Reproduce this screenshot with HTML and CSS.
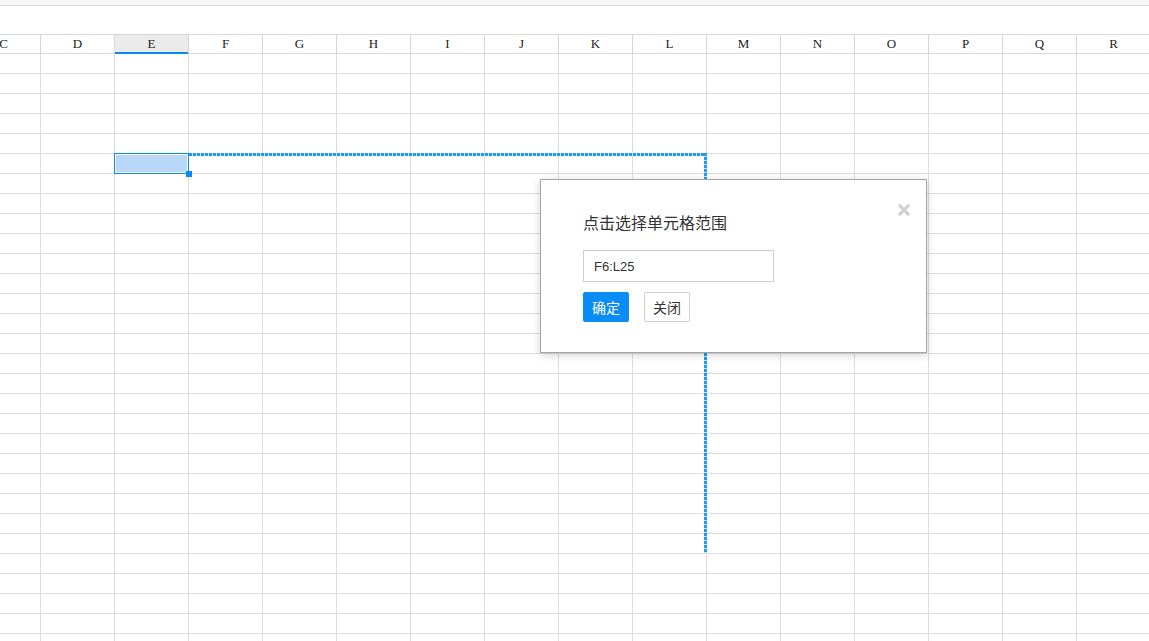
FILE: index.html
```html
<!DOCTYPE html>
<html lang="zh">
<head>
<meta charset="utf-8">
<title>Sheet</title>
<link rel="stylesheet" href="styles.css">
</head>
<body>
<div class="topbar"></div>
<div class="toolbar"></div>
<div class="sheet">
  <div class="colheader">
    <div class="col">C</div>
    <div class="col">D</div>
    <div class="col active">E</div>
    <div class="col">F</div>
    <div class="col">G</div>
    <div class="col">H</div>
    <div class="col">I</div>
    <div class="col">J</div>
    <div class="col">K</div>
    <div class="col">L</div>
    <div class="col">M</div>
    <div class="col">N</div>
    <div class="col">O</div>
    <div class="col">P</div>
    <div class="col">Q</div>
    <div class="col">R</div>
  </div>
  <div class="cells"></div>
  <div class="selection"></div>
  <div class="handle"></div>
  <div class="range-top"></div>
  <div class="range-right"></div>
</div>

<div class="dialog">
  <button class="close" aria-label="close">
    <svg width="12" height="12" viewBox="0 0 12 12"><path d="M2 2 L10 10 M10 2 L2 10" stroke="#d2d2d2" stroke-width="3.2" stroke-linecap="square"/></svg>
  </button>
  <div class="title">点击选择单元格范围</div>
  <input class="range-input" type="text" value="F6:L25">
  <div class="actions">
    <button class="btn primary">确定</button>
    <button class="btn">关闭</button>
  </div>
</div>
</body>
</html>
```

FILE: styles.css
```css
html, body {
  margin: 0;
  padding: 0;
  width: 1149px;
  height: 641px;
  overflow: hidden;
  background: #fff;
  font-family: "Liberation Sans", Arial, "Noto Sans CJK SC", sans-serif;
}

.topbar {
  height: 5px;
  background: #f6f6f8;
  border-bottom: 1px solid #dadada;
}

.toolbar {
  height: 28px;
  background: #fff;
}

.sheet {
  position: relative;
  height: 607px;
  overflow: hidden;
}

.colheader {
  display: flex;
  margin-left: -33px;
  border-top: 1px solid #d6d6d6;
  border-bottom: 1px solid #d6d6d6;
  height: 18px;
  width: 1200px;
}

.col {
  flex: 0 0 73px;
  border-right: 1px solid #d6d6d6;
  text-align: center;
  font-family: "Liberation Serif", "Times New Roman", serif;
  font-size: 13px;
  line-height: 18px;
  color: #222;
}

.col.active {
  background: #ebebeb;
  box-shadow: inset 0 -1px 0 #0a87f0;
  position: relative;
}

.col.active::after {
  content: "";
  position: absolute;
  left: 0;
  right: 0;
  bottom: -1px;
  height: 1px;
  background: #0a87f0;
}

.cells {
  margin-left: -33px;
  height: 588px;
  width: 1200px;
  background-image:
    linear-gradient(to right, transparent 73px, #dcdcdc 73px),
    linear-gradient(to bottom, transparent 19px, #dcdcdc 19px);
  background-size: 74px 20px, 74px 20px;
}

.selection {
  position: absolute;
  left: 114px;
  top: 119px;
  width: 75px;
  height: 21px;
  box-sizing: border-box;
  border: 1px solid #0a87f0;
  background: #b9d7f9;
  box-shadow: inset 0 0 0 1px #fff;
}

.handle {
  position: absolute;
  left: 186px;
  top: 137px;
  width: 6px;
  height: 6px;
  background: #0a87f0;
}

.range-top {
  position: absolute;
  left: 189px;
  top: 119px;
  width: 518px;
  height: 3px;
  background: repeating-linear-gradient(to right, #1a9cf8 0 3px, #cfe8fd 3px 4px);
}

.range-right {
  position: absolute;
  left: 704px;
  top: 119px;
  width: 3px;
  height: 400px;
  background: repeating-linear-gradient(to bottom, #1a9cf8 0 3px, #cfe8fd 3px 4px);
}

.dialog {
  position: absolute;
  left: 540px;
  top: 179px;
  width: 387px;
  height: 174px;
  box-sizing: border-box;
  background: #fff;
  border: 1px solid #a6a6a6;
  box-shadow: 0 2px 8px rgba(0, 0, 0, 0.18);
  padding: 31px 42px 0 42px;
  display: flex;
  flex-direction: column;
  align-items: flex-start;
}

.close {
  position: absolute;
  top: 24px;
  right: 16px;
  width: 12px;
  height: 12px;
  padding: 0;
  border: 0;
  background: none;
  display: flex;
}

.title {
  font-family: "Noto Sans CJK SC", sans-serif;
  font-size: 16px;
  line-height: 22px;
  color: #333;
}

.range-input {
  margin-top: 17px;
  width: 191px;
  height: 32px;
  box-sizing: border-box;
  border: 1px solid #cfcfcf;
  padding: 0 10px;
  font-family: "Liberation Sans", Arial, sans-serif;
  font-size: 13px;
  color: #333;
  outline: none;
}

.actions {
  margin-top: 10px;
  display: flex;
  gap: 15px;
}

.btn {
  height: 30px;
  width: 46px;
  box-sizing: border-box;
  padding: 0;
  border: 1px solid #cfcfcf;
  border-radius: 2px;
  background: #fff;
  color: #333;
  font-family: "Noto Sans CJK SC", sans-serif;
  font-size: 14px;
  line-height: 28px;
}

.btn.primary {
  background: #0a8cf7;
  border-color: #0a8cf7;
  color: #fff;
}
```
